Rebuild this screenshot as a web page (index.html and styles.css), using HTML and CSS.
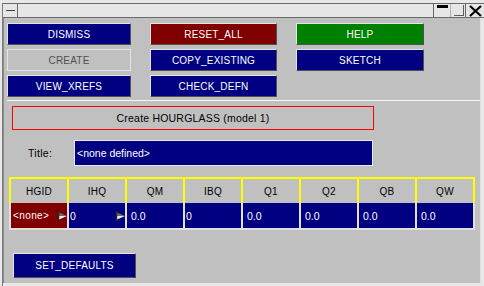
FILE: index.html
```html
<!DOCTYPE html>
<html lang="en">
<head>
    <meta charset="UTF-8">
    <meta name="viewport" content="width=device-width, initial-scale=1.0">
    <title>Create HOURGLASS</title>
    <link rel="stylesheet" href="styles.css">
</head>
<body>
    <div class="window">
        <div class="titlebar">
            <div class="tb-box tb-menu"><span class="dash"></span></div>
            <div class="tb-fill"></div>
            <div class="tb-box tb-min"><span class="bar"></span></div>
            <div class="tb-box tb-max"><span class="corner"></span></div>
            <div class="tb-box tb-close">
                <svg width="13" height="12" viewBox="0 0 13 12">
                    <path d="M1 1 L12 11 M12 1 L1 11" stroke="#000" stroke-width="2.2" fill="none"/>
                </svg>
            </div>
        </div>

        <div class="panel">
            <div class="button-grid">
                <button class="btn btn-blue">DISMISS</button>
                <button class="btn btn-red">RESET_ALL</button>
                <button class="btn btn-green">HELP</button>
                <button class="btn btn-off">CREATE</button>
                <button class="btn btn-blue">COPY_EXISTING</button>
                <button class="btn btn-blue">SKETCH</button>
                <button class="btn btn-blue">VIEW_XREFS</button>
                <button class="btn btn-blue">CHECK_DEFN</button>
            </div>

            <div class="section">
                <div class="heading">Create HOURGLASS (model 1)</div>

                <div class="title-row">
                    <span class="title-label">Title:</span>
                    <div class="title-field">&lt;none defined&gt;</div>
                </div>

                <div class="hg-table">
                    <div class="hg-head">
                        <div class="hg-th">HGID</div>
                        <div class="hg-th">IHQ</div>
                        <div class="hg-th">QM</div>
                        <div class="hg-th">IBQ</div>
                        <div class="hg-th">Q1</div>
                        <div class="hg-th">Q2</div>
                        <div class="hg-th">QB</div>
                        <div class="hg-th">QW</div>
                    </div>
                    <div class="hg-row">
                        <div class="hg-td hg-id">&lt;none&gt;
                            <svg class="pick" width="10" height="10" viewBox="0 0 10 10">
                                <polygon points="1,1 10,5 1,5" fill="#6a6a6a"/>
                                <polygon points="1,5 10,5 1,9" fill="#ececec"/>
                                <path d="M1.5 0 L1.5 10" stroke="#2a2a2a" stroke-width="1.5"/>
                            </svg>
                        </div>
                        <div class="hg-td int">0
                            <svg class="pick" width="10" height="10" viewBox="0 0 10 10">
                                <polygon points="1,1 10,5 1,5" fill="#6a6a6a"/>
                                <polygon points="1,5 10,5 1,9" fill="#ececec"/>
                                <path d="M1.5 0 L1.5 10" stroke="#2a2a2a" stroke-width="1.5"/>
                            </svg>
                        </div>
                        <div class="hg-td real">0.0</div>
                        <div class="hg-td int">0</div>
                        <div class="hg-td real">0.0</div>
                        <div class="hg-td real">0.0</div>
                        <div class="hg-td real">0.0</div>
                        <div class="hg-td real">0.0</div>
                    </div>
                </div>

                <button class="btn btn-blue btn-defaults">SET_DEFAULTS</button>
            </div>
        </div>
    </div>
</body>
</html>
```

FILE: styles.css
```css
:root {
    --panel: #c0c0c0;
    --blue: #000080;
    --red: #800000;
    --green: #008000;
    --light-edge: #e4e4e4;
    --dark-edge: #505050;
}

* {
    box-sizing: border-box;
    margin: 0;
    padding: 0;
}

body {
    background: #e8e8e8;
    font-family: "Liberation Sans", Arial, sans-serif;
    width: 484px;
    height: 286px;
    overflow: hidden;
}

.window {
    margin-left: 2px;
    height: 286px;
    border-left: 1px solid #7c7c7c;
}

/* title bar */
.titlebar {
    display: flex;
    margin-top: 3px;
    height: 15px;
    background: #e6e6e6;
    border-top: 1px solid #6a6a6a;
    border-bottom: 1px solid #6a6a6a;
}

.tb-box {
    position: relative;
    height: 100%;
}

.tb-menu {
    width: 15px;
    border-right: 1px solid #6a6a6a;
}

.dash {
    position: absolute;
    left: 3px;
    top: 6px;
    width: 9px;
    height: 1px;
    background: #404040;
}

.tb-fill {
    flex: 1;
}

.tb-min {
    width: 17px;
    border-left: 1px solid #6a6a6a;
}

.bar {
    position: absolute;
    left: 3px;
    top: 1px;
    width: 11px;
    height: 3px;
    background: #000;
}

.tb-max {
    width: 15px;
    border-left: 1px solid #b0b0b0;
}

.corner {
    position: absolute;
    right: 1px;
    top: 1px;
    width: 10px;
    height: 11px;
    border-right: 1px solid #606060;
    border-bottom: 1px solid #606060;
}

.tb-close {
    width: 19px;
    border-left: 1px solid #6a6a6a;
    display: flex;
    align-items: center;
    justify-content: center;
}

/* main panel */
.panel {
    width: 478px;
    height: 265px;
    background: var(--panel);
    border-left: 1px solid #8a8a8a;
    border-right: 1px solid #e0e0e0;
    padding-top: 5px;
}

.button-grid {
    display: grid;
    grid-template-columns: 124px 127px 128px;
    grid-auto-rows: 22px;
    column-gap: 19px;
    row-gap: 4px;
    margin-left: 3px;
    padding-bottom: 3px;
    border-bottom: 1px solid #f4f4f4;
}

.btn {
    font-family: "Liberation Sans", Arial, sans-serif;
    font-size: 10px;
    letter-spacing: 0.2px;
    color: #fff;
    border: 1px solid;
    border-color: var(--light-edge) var(--dark-edge) var(--dark-edge) var(--light-edge);
    cursor: pointer;
}

.btn-blue {
    background: var(--blue);
}

.btn-red {
    background: var(--red);
}

.btn-green {
    background: var(--green);
}

.btn-off {
    background: var(--panel);
    color: #505050;
    border-color: #e4e4e4;
}

/* create section */
.section {
    padding-top: 5px;
}

.heading {
    margin-left: 8px;
    width: 362px;
    height: 24px;
    border: 1px solid #ff0000;
    font-size: 10.5px;
    color: #000;
    display: flex;
    align-items: center;
    justify-content: center;
    letter-spacing: 0.2px;
}

.title-row {
    display: flex;
    align-items: center;
    margin-top: 10px;
}

.title-label {
    width: 70px;
    padding-left: 24px;
    font-size: 10.5px;
    letter-spacing: 0.3px;
    color: #000;
}

.title-field {
    width: 299px;
    height: 26px;
    background: var(--blue);
    border: 1px solid #e8e8e8;
    color: #fff;
    font-size: 10.5px;
    padding-left: 2px;
    display: flex;
    align-items: center;
}

/* table */
.hg-table {
    margin: 11px 0 0 5px;
    width: 466px;
}

.hg-head,
.hg-row {
    display: grid;
    grid-template-columns: repeat(8, 1fr);
    column-gap: 2px;
    padding: 0 2px;
}

.hg-head {
    background: #ffff00;
    padding-top: 2px;
}

.hg-row {
    background: #e0e0e0;
    padding-bottom: 2px;
}

.hg-th {
    height: 24px;
    background: var(--panel);
    font-size: 10px;
    color: #000;
    display: flex;
    align-items: center;
    justify-content: center;
    letter-spacing: 0.3px;
}

.hg-td {
    position: relative;
    height: 25px;
    background: var(--blue);
    color: #fff;
    font-size: 10.5px;
    display: flex;
    align-items: center;
}

.hg-id {
    background: var(--red);
    padding-left: 2px;
    font-size: 10px;
    letter-spacing: 0.4px;
}

.int {
    padding-left: 1px;
}

.real {
    padding-left: 4px;
}

.pick {
    position: absolute;
    right: 0;
    top: 8px;
}

.btn-defaults {
    display: block;
    margin: 23px 0 0 9px;
    width: 123px;
    height: 25px;
}
```
